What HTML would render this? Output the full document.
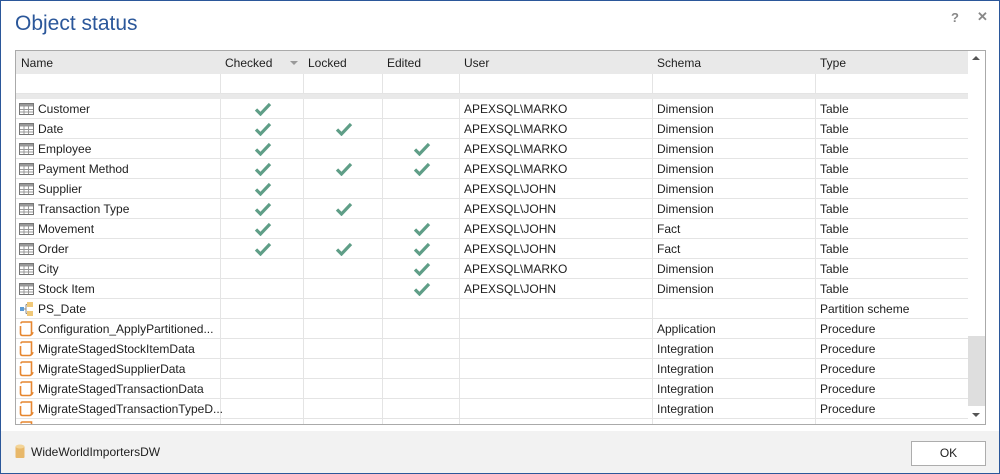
<!DOCTYPE html>
<html><head><meta charset="utf-8"><style>
*{margin:0;padding:0;box-sizing:border-box}
body{width:1000px;height:474px;overflow:hidden;background:#fff;font-family:"Segoe UI","Liberation Sans",sans-serif;font-size:12px;color:#1e1e1e;position:relative}
.win{position:absolute;left:0;top:0;width:1000px;height:474px;border:1px solid #2b579a}
.title{position:absolute;left:15px;top:12px;font-size:21px;color:#2b579a}
.hq{position:absolute;left:951px;top:10px;color:#888;font-weight:bold;font-size:13px}
.hx{position:absolute;left:977px;top:9px;color:#888;font-weight:bold;font-size:13px}
.grid{position:absolute;left:15px;top:50px;width:971px;height:375px;border:1px solid #aaa;overflow:hidden;background:#fff}
.hdr{position:absolute;left:0;top:0;width:952px;height:23px;background:#e9e9e9}
.t{position:absolute;white-space:nowrap;line-height:20px}
.vl{position:absolute;width:1px;background:#e4e4e4}
.hl{position:absolute;left:0;width:952px;height:1px;background:#e4e4e4}
.band{position:absolute;left:0;top:43px;width:952px;height:5px;background:#e9e9e9}
.sb{position:absolute;left:952px;top:0;width:17px;height:373px;background:#fff}
.thumb{position:absolute;left:952px;top:285px;width:17px;height:70px;background:#dedede}
.ck{position:absolute;width:18px;height:14px}
.foot{position:absolute;left:1px;top:431px;width:998px;height:42px;background:#f2f2f2}
.ok{position:absolute;left:911px;top:441px;width:75px;height:25px;border:1px solid #adadad;background:#fff;text-align:center;line-height:23px;font-size:12px}
</style></head><body>
<div class="win"></div>
<div class="title">Object status</div>
<div class="hq">?</div><div class="hx">✕</div>
<div class="grid">
<div class="hdr"></div>
<div class="band"></div>
<div class="t" style="left:5px;top:2px">Name</div>
<div class="t" style="left:209px;top:2px">Checked</div>
<div style="position:absolute;left:274px;top:10px;border-left:4px solid transparent;border-right:4px solid transparent;border-top:4px solid #999"></div>
<div class="t" style="left:292px;top:2px">Locked</div>
<div class="t" style="left:371px;top:2px">Edited</div>
<div class="t" style="left:448px;top:2px">User</div>
<div class="t" style="left:641px;top:2px">Schema</div>
<div class="t" style="left:804px;top:2px">Type</div>
<div class="vl" style="left:204px;top:23px;height:20px"></div>
<div class="vl" style="left:287px;top:23px;height:20px"></div>
<div class="vl" style="left:366px;top:23px;height:20px"></div>
<div class="vl" style="left:443px;top:23px;height:20px"></div>
<div class="vl" style="left:636px;top:23px;height:20px"></div>
<div class="vl" style="left:799px;top:23px;height:20px"></div>
<div class="vl" style="left:204px;top:48px;height:330px"></div>
<div class="vl" style="left:287px;top:48px;height:330px"></div>
<div class="vl" style="left:366px;top:48px;height:330px"></div>
<div class="vl" style="left:443px;top:48px;height:330px"></div>
<div class="vl" style="left:636px;top:48px;height:330px"></div>
<div class="vl" style="left:799px;top:48px;height:330px"></div>
<div id="rows"></div>
<div class="sb"></div>
<div class="thumb"></div>
<div style="position:absolute;left:956px;top:5px;border-left:4px solid transparent;border-right:4px solid transparent;border-bottom:4px solid #555"></div>
<div style="position:absolute;left:956px;top:362px;border-left:4px solid transparent;border-right:4px solid transparent;border-top:4px solid #555"></div>
</div>
<div class="foot"></div>
<svg style="position:absolute;left:15px;top:444px" width="10" height="16"><rect x="0.5" y="2" width="9" height="12" rx="1" fill="#e8b86a"/><ellipse cx="5" cy="2.5" rx="4.5" ry="2" fill="#f3d497"/></svg>
<div class="t" style="left:31px;top:442px;font-size:12px">WideWorldImportersDW</div>
<div class="ok">OK</div>
<script>
var T='<svg width="15" height="12" viewBox="0 0 15 12"><rect x="0.5" y="0.5" width="14" height="11" fill="#fff" stroke="#777"/><rect x="1" y="1" width="13" height="2.5" fill="#999"/><path d="M1 6.5H14M1 9H14M5 3V11M9.5 3V11" stroke="#999"/></svg>';
var P='<svg width="15" height="16" viewBox="0 0 15 16"><path d="M2 2.5Q2 1 3.5 1H12.5V12.5Q12.5 14.5 10.5 14.5H3.5Q1.5 14.5 1.5 12.5V5" fill="#fff" stroke="#e6862f" stroke-width="1.6"/><path d="M12.5 12.5Q13.5 14.5 14 11" fill="none" stroke="#e6862f" stroke-width="1.2"/></svg>';
var S='<svg width="15" height="16" viewBox="0 0 15 16"><rect x="8" y="1" width="6" height="5" fill="#f0c878"/><rect x="8" y="10" width="6" height="5" fill="#f0c878"/><rect x="1" y="6" width="4" height="4" fill="#5b9bd5"/><path d="M5 8H7M7 3.5V12.5M7 3.5H8M7 12.5H8" stroke="#888" fill="none"/></svg>';
var C='<svg viewBox="0 0 18 14" width="18" height="14"><path d="M2 7.5L6.5 12L16 2" fill="none" stroke="#5f9e87" stroke-width="3.2"/></svg>';
var rows=[
['T','Customer',1,0,0,'APEXSQL\\MARKO','Dimension','Table'],
['T','Date',1,1,0,'APEXSQL\\MARKO','Dimension','Table'],
['T','Employee',1,0,1,'APEXSQL\\MARKO','Dimension','Table'],
['T','Payment Method',1,1,1,'APEXSQL\\MARKO','Dimension','Table'],
['T','Supplier',1,0,0,'APEXSQL\\JOHN','Dimension','Table'],
['T','Transaction Type',1,1,0,'APEXSQL\\JOHN','Dimension','Table'],
['T','Movement',1,0,1,'APEXSQL\\JOHN','Fact','Table'],
['T','Order',1,1,1,'APEXSQL\\JOHN','Fact','Table'],
['T','City',0,0,1,'APEXSQL\\MARKO','Dimension','Table'],
['T','Stock Item',0,0,1,'APEXSQL\\JOHN','Dimension','Table'],
['S','PS_Date',0,0,0,'','','Partition scheme'],
['P','Configuration_ApplyPartitioned...',0,0,0,'','Application','Procedure'],
['P','MigrateStagedStockItemData',0,0,0,'','Integration','Procedure'],
['P','MigrateStagedSupplierData',0,0,0,'','Integration','Procedure'],
['P','MigrateStagedTransactionData',0,0,0,'','Integration','Procedure'],
['P','MigrateStagedTransactionTypeD...',0,0,0,'','Integration','Procedure'],
['P','',0,0,0,'','','']];
var h='',cx=[247,328,406];
rows.forEach(function(r,i){var y=48+i*20;
h+='<div class="hl" style="top:'+(y+19)+'px"></div>';
var ic=r[0]=='T'?T:r[0]=='P'?P:S;var iy=r[0]=='T'?y+4:y+2;
h+='<div style="position:absolute;left:3px;top:'+iy+'px">'+ic+'</div>';
h+='<div class="t" style="left:22px;top:'+y+'px">'+r[1]+'</div>';
for(var k=0;k<3;k++)if(r[2+k])h+='<div class="ck" style="left:'+(cx[k]-9)+'px;top:'+(y+3)+'px">'+C+'</div>';
h+='<div class="t" style="left:448px;top:'+y+'px">'+r[5]+'</div>';
h+='<div class="t" style="left:641px;top:'+y+'px">'+r[6]+'</div>';
h+='<div class="t" style="left:804px;top:'+y+'px">'+r[7]+'</div>';});
h+='<div class="hl" style="top:42px"></div>';
document.getElementById('rows').innerHTML=h;
</script>
</body></html>
